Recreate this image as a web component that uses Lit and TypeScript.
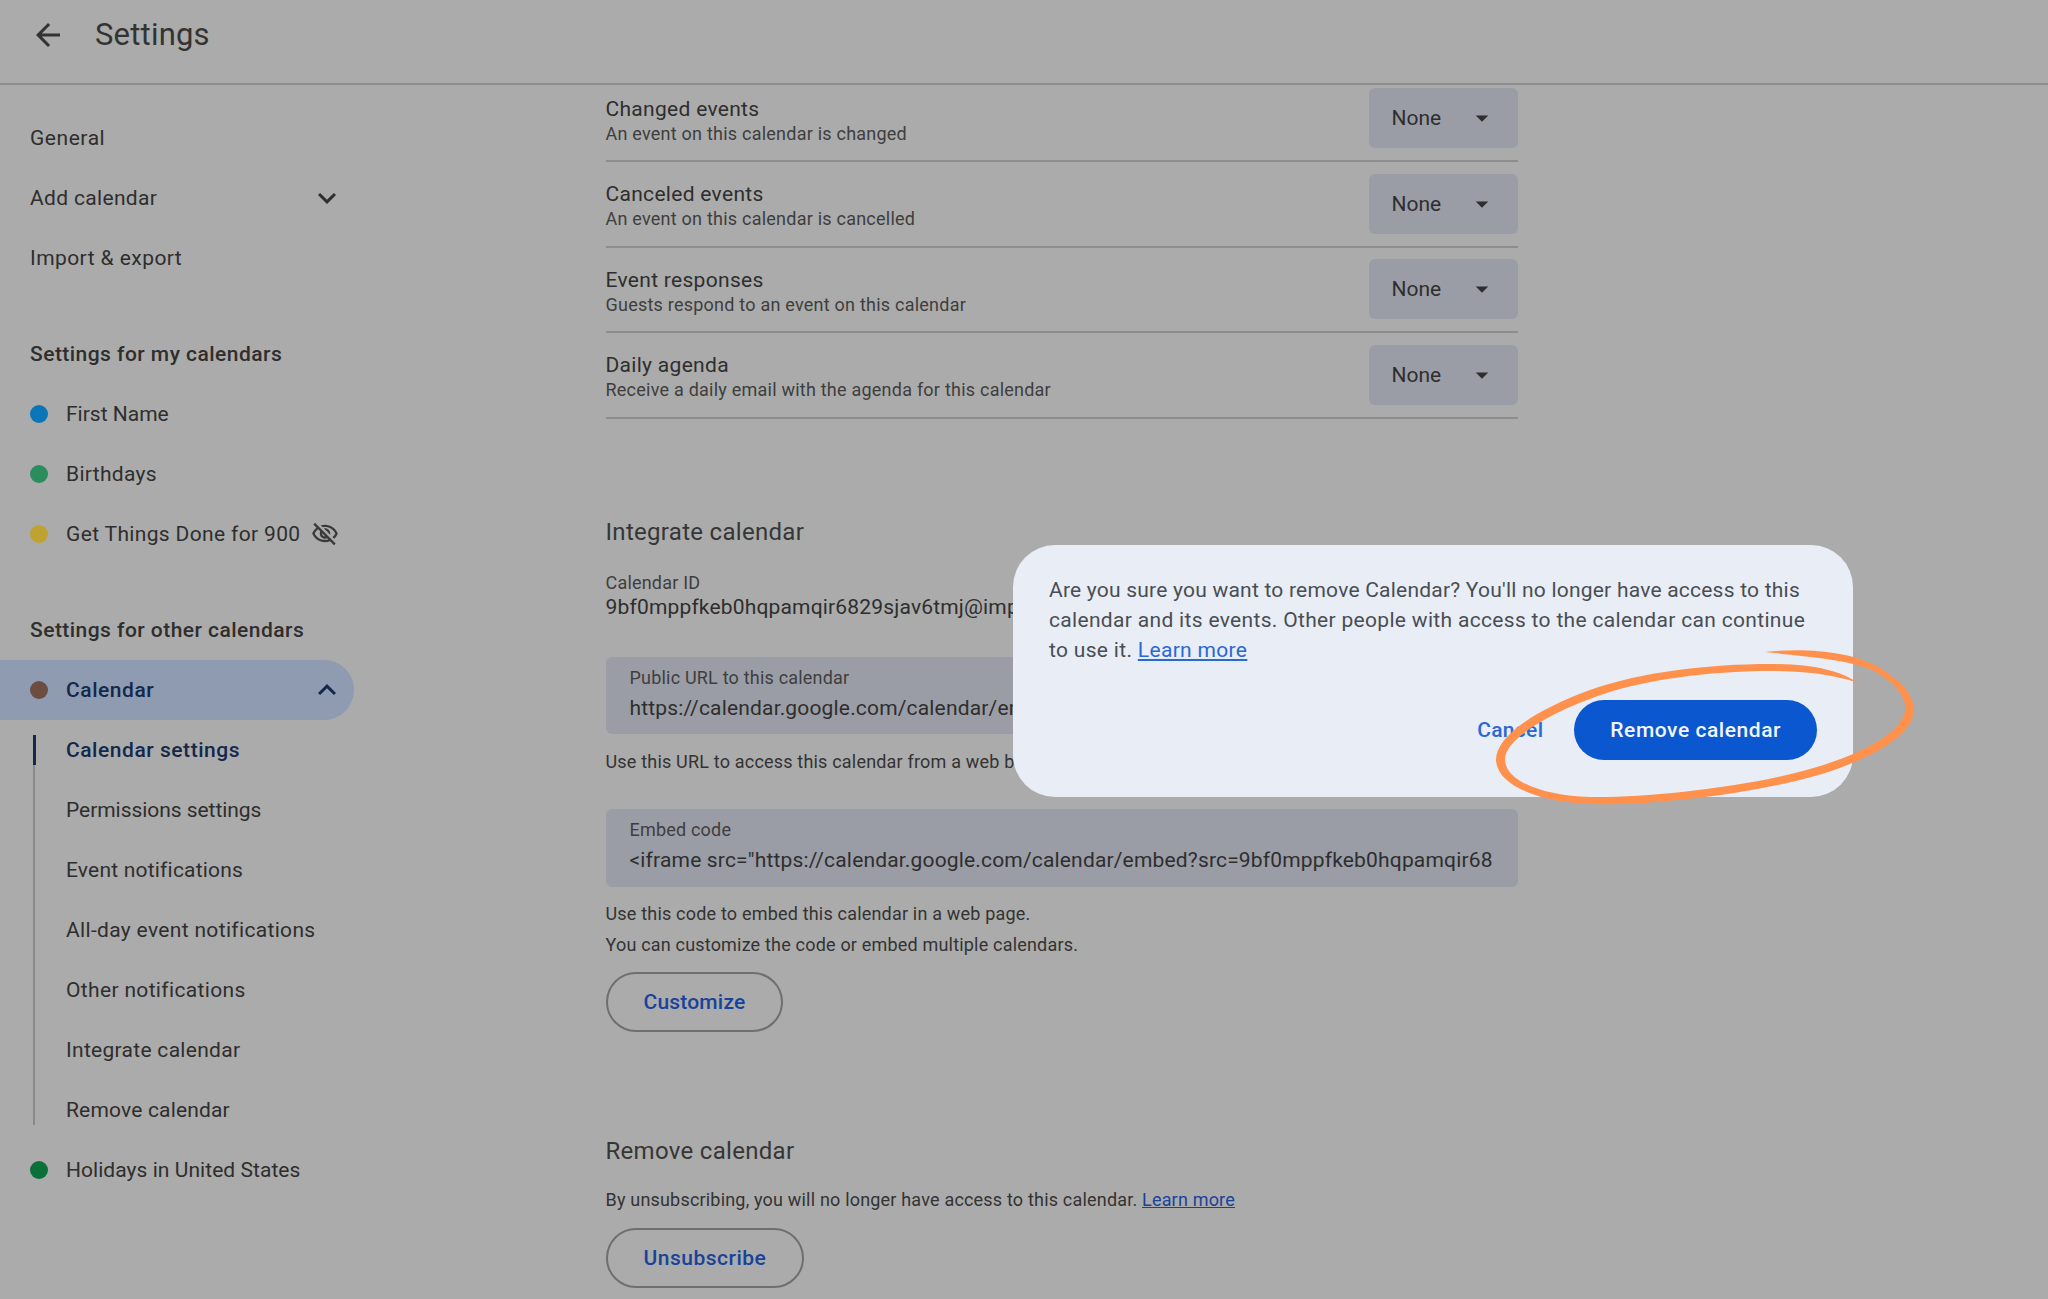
import { LitElement, html, css, svg } from 'lit';
import { customElement } from 'lit/decorators.js';

const EXPAND = svg`<path d="M16.59 8.59L12 13.17 7.41 8.59 6 10l6 6 6-6z"/>`;
const COLLAPSE = svg`<path d="M7.41 15.41L12 10.83l4.59 4.58L18 14l-6-6-6 6z"/>`;
const BACK = svg`<path d="M20 11H7.83l5.59-5.59L12 4l-8 8 8 8 1.41-1.41L7.83 13H20v-2z"/>`;
const EYE_OFF = svg`<path d="M12 6c3.79 0 7.17 2.13 8.82 5.5-.59 1.22-1.42 2.27-2.41 3.12l1.41 1.41c1.39-1.23 2.49-2.77 3.18-4.53C21.27 7.11 17 4 12 4c-1.27 0-2.49.2-3.64.57l1.65 1.65C10.66 6.09 11.32 6 12 6zm-1.07 1.14L13 9.21c.57.25 1.03.71 1.28 1.28l2.07 2.07c.08-.34.14-.7.14-1.07C16.5 9.01 14.48 7 12 7c-.37 0-.72.05-1.07.14zM2.01 3.87l2.68 2.68C3.06 7.83 1.77 9.53 1 11.5 2.73 15.89 7 19 12 19c1.52 0 2.98-.29 4.32-.82l3.42 3.42 1.41-1.41L3.42 2.45 2.01 3.87zm7.5 7.5l2.61 2.61c-.04.01-.08.02-.12.02-1.38 0-2.5-1.12-2.5-2.5 0-.05.01-.08.01-.13zm-3.4-3.4l1.75 1.75c-.23.55-.36 1.15-.36 1.78 0 2.48 2.02 4.5 4.5 4.5.63 0 1.23-.13 1.77-.36l.98.98c-.88.24-1.8.38-2.75.38-3.79 0-7.17-2.13-8.82-5.5.7-1.43 1.72-2.61 2.93-3.53z"/>`;

const notifications = [
  ['Changed events', 'An event on this calendar is changed'],
  ['Canceled events', 'An event on this calendar is cancelled'],
  ['Event responses', 'Guests respond to an event on this calendar'],
  ['Daily agenda', 'Receive a daily email with the agenda for this calendar'],
];

// letter spacing per label, Roboto runs a bit off the reference's face
const subItems: [string, number][] = [
  ['Calendar settings', 0.54],
  ['Permissions settings', -0.05],
  ['Event notifications', 0.2],
  ['All-day event notifications', 0.33],
  ['Other notifications', 0.34],
  ['Integrate calendar', 0.29],
  ['Remove calendar', 0.17],
];

@customElement('app-root')
export class AppRoot extends LitElement {
  static styles = css`
    :host {
      display: block;
      position: relative;
      height: 1299px;
      overflow: hidden;
      background: #ababab;
      color: #2e2e2e;
      font-family: Roboto, 'Noto Sans', sans-serif;
      font-size: 21px;
    }
    svg { fill: currentColor; display: block; flex: none; }

    /* top bar */
    .topbar {
      position: relative;
      height: 85px;
      box-sizing: border-box;
      display: flex;
      align-items: center;
      padding: 0 0 14px 30px;
      gap: 29px;
      border-bottom: 2px solid #8f8f8f;
    }
    .topbar svg { width: 36px; height: 36px; color: #333; }
    .topbar h1 { margin: 0; font-size: 31px; letter-spacing: 0.2px; font-weight: 400; color: #333; }

    .body { display: flex; }

    /* sidebar */
    .side { width: 354px; margin-right: 251.5px; padding-top: 23px; flex: none; }
    .item {
      height: 60px;
      display: flex;
      align-items: center;
      padding-left: 30px;
      box-sizing: border-box;
    }
    .item .chev { margin-left: auto; margin-right: 9px; width: 36px; height: 36px; }
    .section { margin-top: 36px; font-weight: 500; letter-spacing: 0.46px; }
    .dot { width: 18px; height: 18px; border-radius: 50%; margin-right: 18px; flex: none; }
    .eye { width: 28px; height: 28px; margin-left: 10px; color: #3a3a3a; }
    .active { background: #8f9bb0; border-radius: 0 30px 30px 0; color: #14284b; font-weight: 500; letter-spacing: 0.55px; }
    .subs { position: relative; }
    .sub { padding-left: 66px; }
    .sub.cur { color: #14284b; font-weight: 500; }
    .rail { position: absolute; left: 33px; top: 15px; bottom: 15px; width: 2px; background: #8a8a8a; }
    .rail::before {
      content: '';
      position: absolute;
      left: 0;
      top: 0;
      width: 3px;
      height: 30px;
      background: #14284b;
    }

    /* main column, scrolled a little under the top bar */
    .main { width: 912px; flex: none; margin-top: -8.6px; }
    .row {
      height: 85.6px;
      box-sizing: border-box;
      display: flex;
      align-items: center;
      justify-content: space-between;
      border-bottom: 2px solid #8d8d8d;
    }
    .row-text { padding-top: 5px; }
    .row-title { line-height: 26px; letter-spacing: 0.3px; }
    .row-sub { font-size: 18px; line-height: 24px; color: #3e3e3e; letter-spacing: 0.23px; }
    .select {
      width: 149px;
      height: 60px;
      box-sizing: border-box;
      background: #9a9da5;
      border-radius: 6px;
      display: flex;
      align-items: center;
      padding: 0 21px 0 23px;
      justify-content: space-between;
    }
    .select svg { width: 30px; height: 30px; }
    h2 { margin: 0; font-size: 24px; font-weight: 400; color: #363636; line-height: 30px; letter-spacing: 0.3px; }
    .field-label { font-size: 18px; line-height: 24px; color: #3e3e3e; letter-spacing: 0.2px; }
    .clip { white-space: nowrap; overflow: hidden; letter-spacing: 0.17px; }
    .box {
      background: #9a9da5;
      border-radius: 6px;
      box-sizing: border-box;
      padding: 9px 24px 0;
    }
    .hint { font-size: 18px; line-height: 24px; color: #333; letter-spacing: 0.19px; }
    .btn {
      display: inline-flex;
      align-items: center;
      height: 60px;
      box-sizing: border-box;
      padding: 0 36px;
      border: 2px solid #6f6f6f;
      border-radius: 30px;
      color: #17439b;
      font-weight: 500;
      letter-spacing: 0.5px;
    }
    .btn.short { letter-spacing: 0.2px; }
    a { color: #17439b; text-decoration: underline; }

    /* dialog over the dimmed page */
    .dialog {
      position: absolute;
      left: 1013px;
      top: 545px;
      width: 840px;
      height: 252px;
      box-sizing: border-box;
      padding: 30px 36px 0;
      background: #e8edf6;
      border-radius: 42px;
      color: #4a4d52;
      line-height: 30px;
      letter-spacing: 0.32px;
      white-space: nowrap;
    }
    .dialog .first { letter-spacing: 0.22px; }
    .dialog a { color: #2a68d6; }
    .actions {
      position: absolute;
      right: 36px;
      bottom: 37px;
      display: flex;
      align-items: center;
      gap: 31px;
      font-weight: 500;
    }
    .cancel { color: #2a68d6; }
    .primary {
      height: 60px;
      padding: 0 36px;
      border-radius: 30px;
      background: #0b57d0;
      color: #f2f5fb;
      display: flex;
      align-items: center;
      letter-spacing: 0.55px;
    }
    .scribble { position: absolute; left: 0; top: 0; width: 2048px; height: 1299px; fill: #ff914d; pointer-events: none; }
  `;

  private tracked(label: string, spacing: number) {
    return html`<span style="letter-spacing:${spacing}px">${label}</span>`;
  }

  private dotItem(color: string, label: string, spacing: number) {
    return html`<div class="item"><span class="dot" style="background:${color}"></span>${this.tracked(label, spacing)}</div>`;
  }

  render() {
    return html`
      <div class="topbar">
        <svg viewBox="0 0 24 24">${BACK}</svg>
        <h1>Settings</h1>
      </div>
      <div class="body">
        <nav class="side">
          <div class="item">${this.tracked('General', 0.55)}</div>
          <div class="item">${this.tracked('Add calendar', 0.33)} <svg class="chev" viewBox="0 0 24 24">${EXPAND}</svg></div>
          <div class="item">${this.tracked('Import & export', 0.43)}</div>
          <div class="item section">Settings for my calendars</div>
          ${this.dotItem('#0a76b8', 'First Name', 0)}
          ${this.dotItem('#2b8c5e', 'Birthdays', 0.3)}
          <div class="item">
            <span class="dot" style="background:#c0a232"></span>${this.tracked('Get Things Done for 900', 0.35)}
            <svg class="eye" viewBox="0 0 24 24">${EYE_OFF}</svg>
          </div>
          <div class="item section">Settings for other calendars</div>
          <div class="item active">
            <span class="dot" style="background:#6d4c41"></span>Calendar
            <svg class="chev" viewBox="0 0 24 24">${COLLAPSE}</svg>
          </div>
          <div class="subs">
            <div class="rail"></div>
            ${subItems.map(([s, t], i) => html`<div class="item sub ${i === 0 ? 'cur' : ''}">${this.tracked(s, t)}</div>`)}
          </div>
          ${this.dotItem('#0a7039', 'Holidays in United States', 0.05)}
        </nav>

        <main class="main">
          ${notifications.map(
            ([title, sub]) => html`
              <div class="row">
                <div class="row-text">
                  <div class="row-title">${title}</div>
                  <div class="row-sub">${sub}</div>
                </div>
                <div class="select">None <svg viewBox="0 0 24 24"><path d="M7 10l5 5 5-5z"/></svg></div>
              </div>
            `
          )}
          <h2 style="margin-top:98px">Integrate calendar</h2>
          <div class="field-label" style="margin-top:24px">Calendar ID</div>
          <div class="clip">9bf0mppfkeb0hqpamqir6829sjav6tmj@import.calendar.google.com</div>
          <div class="box clip" style="margin-top:38px;height:77px">
            <div class="field-label">Public URL to this calendar</div>
            <div style="margin-top:6px">https://calendar.google.com/calendar/embed?src=9bf0mppfkeb0hqpamqir68</div>
          </div>
          <div class="hint" style="margin-top:16px">Use this URL to access this calendar from a web browser.</div>
          <div class="box clip" style="margin-top:35px;height:78px">
            <div class="field-label">Embed code</div>
            <div style="margin-top:6px">&lt;iframe src="https://calendar.google.com/calendar/embed?src=9bf0mppfkeb0hqpamqir68</div>
          </div>
          <div class="hint" style="margin-top:15px">Use this code to embed this calendar in a web page.</div>
          <div class="hint" style="margin-top:7px">You can customize the code or embed multiple calendars.</div>
          <div class="btn short" style="margin-top:15px">Customize</div>
          <h2 style="margin-top:104px">Remove calendar</h2>
          <div class="hint" style="margin-top:22px">By unsubscribing, you will no longer have access to this calendar. <a>Learn more</a></div>
          <div class="btn" style="margin-top:16px">Unsubscribe</div>
        </main>
      </div>

      <div class="dialog">
        <span class="first">Are you sure you want to remove Calendar? You'll no longer have access to this</span><br />
        calendar and its events. Other people with access to the calendar can continue<br />
        to use it. <a>Learn more</a>
        <div class="actions">
          <span class="cancel">Cancel</span>
          <div class="primary">Remove calendar</div>
        </div>
      </div>

      <svg class="scribble" viewBox="0 0 2048 1299">
        <path d="M1765 652 C1800 648 1850 650 1880 668 C1906 684 1917 700 1913 716 C1907 740 1860 765 1800 780 C1730 797 1640 806 1590 804 C1540 802 1497 786 1496 760 C1496 738 1530 712 1590 690 C1640 672 1710 664 1770 664 C1810 664 1840 670 1858 683 C1838 676 1810 671 1770 671 C1710 671 1640 680 1595 697 C1540 717 1504 742 1505 760 C1506 782 1545 796 1590 797 C1640 798 1730 789 1795 773 C1855 758 1900 735 1905 712 C1908 698 1895 682 1872 670 C1848 659 1800 656 1765 652 Z"/>
      </svg>
    `;
  }
}
